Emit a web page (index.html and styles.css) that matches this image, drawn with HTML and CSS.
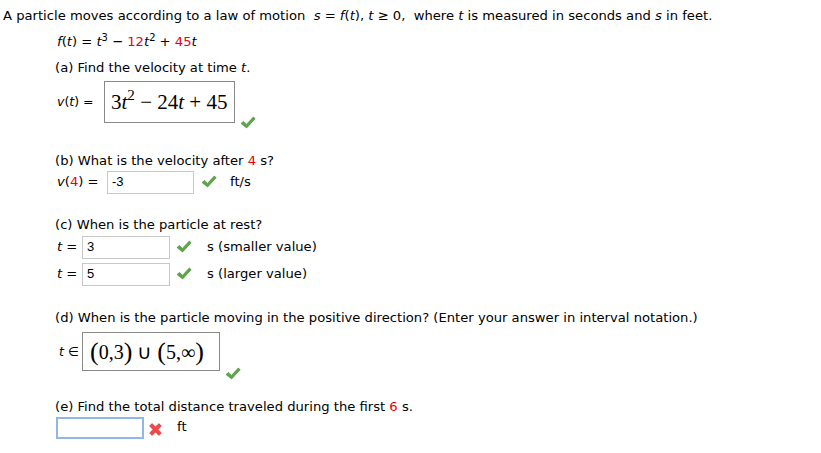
FILE: index.html
```html
<!DOCTYPE html>
<html>
<head>
<meta charset="utf-8">
<link rel="stylesheet" href="styles.css">
</head>
<body>
<div class="page">
  <p class="intro">A particle moves according to a law of motion&nbsp; <i>s</i> = <i>f</i>(<i>t</i>), <i>t</i> ≥ 0,&nbsp; where <i>t</i> is measured in seconds and <i>s</i> in feet.</p>
  <p class="formula"><i>f</i>(<i>t</i>) = <i>t</i><sup>3</sup> − <span class="red">12</span><i>t</i><sup>2</sup> + <span class="red">45</span><i>t</i></p>

  <div class="part part-a">
    <p class="q">(a) Find the velocity at time <i>t</i>.</p>
    <div class="row">
      <span class="lbl lbl-a"><i>v</i>(<i>t</i>) =</span>
      <span class="mathbox mb-a"><span class="m">3<i>t</i><sup>2</sup> − 24<i>t</i> + 45</span></span>
      <span class="ico ico-low"><svg width="16" height="13" viewBox="0 0 16 13"><path d="M1 7.5 L3.6 5.4 L6.4 8.4 L13.3 1 L15.2 2.7 L6.6 12 Z" fill="#5aa845" stroke="#3f8a30" stroke-width="0.6"/></svg></span>
    </div>
  </div>

  <div class="part part-b">
    <p class="q">(b) What is the velocity after <span class="red">4</span> s?</p>
    <div class="row">
      <span class="lbl lbl-b"><i>v</i>(<span class="red">4</span>) =</span>
      <span class="inp inp-b">-3</span>
      <span class="ico"><svg width="16" height="13" viewBox="0 0 16 13"><path d="M1 7.5 L3.6 5.4 L6.4 8.4 L13.3 1 L15.2 2.7 L6.6 12 Z" fill="#5aa845" stroke="#3f8a30" stroke-width="0.6"/></svg></span>
      <span class="unit">ft/s</span>
    </div>
  </div>

  <div class="part part-c">
    <p class="q">(c) When is the particle at rest?</p>
    <div class="row row-c">
      <span class="lbl lbl-c"><i>t</i> =</span>
      <span class="inp inp-c">3</span>
      <span class="ico"><svg width="16" height="13" viewBox="0 0 16 13"><path d="M1 7.5 L3.6 5.4 L6.4 8.4 L13.3 1 L15.2 2.7 L6.6 12 Z" fill="#5aa845" stroke="#3f8a30" stroke-width="0.6"/></svg></span>
      <span class="unit">s (smaller value)</span>
    </div>
    <div class="row row-c2">
      <span class="lbl lbl-c"><i>t</i> =</span>
      <span class="inp inp-c">5</span>
      <span class="ico"><svg width="16" height="13" viewBox="0 0 16 13"><path d="M1 7.5 L3.6 5.4 L6.4 8.4 L13.3 1 L15.2 2.7 L6.6 12 Z" fill="#5aa845" stroke="#3f8a30" stroke-width="0.6"/></svg></span>
      <span class="unit">s (larger value)</span>
    </div>
  </div>

  <div class="part part-d">
    <p class="q">(d) When is the particle moving in the positive direction? (Enter your answer in interval notation.)</p>
    <div class="row">
      <span class="lbl lbl-d"><i>t</i> ∈</span>
      <span class="mathbox mb-d"><span class="m m-d"><span class="par">(</span>0,3<span class="par">)</span> ∪ <span class="par">(</span>5,∞<span class="par">)</span></span></span>
      <span class="ico ico-low"><svg width="16" height="13" viewBox="0 0 16 13"><path d="M1 7.5 L3.6 5.4 L6.4 8.4 L13.3 1 L15.2 2.7 L6.6 12 Z" fill="#5aa845" stroke="#3f8a30" stroke-width="0.6"/></svg></span>
    </div>
  </div>

  <div class="part part-e">
    <p class="q">(e) Find the total distance traveled during the first <span class="red">6</span> s.</p>
    <div class="row">
      <span class="inp inp-e"></span>
      <span class="ico ico-x"><svg width="15" height="15" viewBox="0 0 14 14"><path d="M1.5 3.8 L3.8 1.5 L7 4.7 L10.2 1.5 L12.5 3.8 L9.3 7 L12.5 10.2 L10.2 12.5 L7 9.3 L3.8 12.5 L1.5 10.2 L4.7 7 Z" fill="#f04848" stroke="#d83030" stroke-width="0.6" stroke-linejoin="round"/></svg></span>
      <span class="unit">ft</span>
    </div>
  </div>
</div>
</body>
</html>
```
FILE: styles.css
```css
html, body {
  margin: 0;
  padding: 0;
  background: #fff;
}
.page {
  font-family: "DejaVu Sans", Verdana, sans-serif;
  font-size: 13.15px;
  color: #000;
  padding: 6px 0 0 3px;
}
p { margin: 0; }
sup { font-size: 0.75em; line-height: 0; vertical-align: 0.5em; }
.red { color: #e8000b; }
.intro { line-height: 20px; }
.formula { line-height: 20px; margin: 6px 0 0 54px; }
.part { margin-left: 52px; }
.q { line-height: 20px; }
.row { display: flex; align-items: flex-start; }
.part-a { margin-top: 6px; }
.part-a .row { margin-top: 3px; }
.lbl { line-height: 20px; white-space: nowrap; }
.lbl-a { margin: 11px 0 0 2px; width: 47px; font-size: 12.5px; }
.mathbox {
  border: 1px solid #888;
  box-sizing: border-box;
  display: flex;
  align-items: center;
}
.mb-a { width: 131px; height: 42px; padding-left: 6px; }
.m {
  font-family: "Liberation Serif", "Times New Roman", serif;
  font-size: 21px;
  white-space: nowrap;
}
.m sup { font-size: 0.72em; vertical-align: 0.6em; }
.ico { display: flex; margin: 4px 0 0 7px; }
.ico-low { margin-top: 35px; margin-left: 5px; }
.part-b { margin-top: 22px; }
.part-b .row { margin-top: 0; }
.lbl-b { margin: 1px 0 0 2px; width: 50px; }
.inp {
  border: 1px solid #c8c8c8;
  box-sizing: border-box;
  height: 23px;
  line-height: 20px;
  padding-left: 4px;
  font-size: 13px;
  font-family: "Liberation Sans", Arial, sans-serif;
}
.inp-b { width: 87px; }
.unit { line-height: 20px; margin: 1px 0 0 13px; }
.part-c { margin-top: 21px; }
.row-c { margin-top: 1px; }
.row-c2 { margin-top: 4px; }
.lbl-c { margin: 1px 0 0 2px; width: 25px; }
.inp-c { width: 88px; }
.part-c .ico { margin-left: 6px; }
.part-c .unit { margin-left: 15px; }
.part-d { margin-top: 22px; }
.part-d .row { margin-top: 4px; }
.lbl-d { margin: 10px 0 0 4px; width: 23px; font-size: 12.5px; }
.mb-d { width: 138px; height: 39px; padding-left: 7px; }
.m-d { font-size: 20px; }
.par { font-size: 26px; vertical-align: -1px; }
.part-e { margin-top: 17px; }
.part-e .row { margin-top: 0; }
.inp-e { width: 88px; border: 2px solid #8fb8e8; height: 22px; margin-left: 1px; }
.ico-x { margin: 5px 0 0 4px; }
.part-e .unit { margin-left: 14px; margin-top: 0; }
```
